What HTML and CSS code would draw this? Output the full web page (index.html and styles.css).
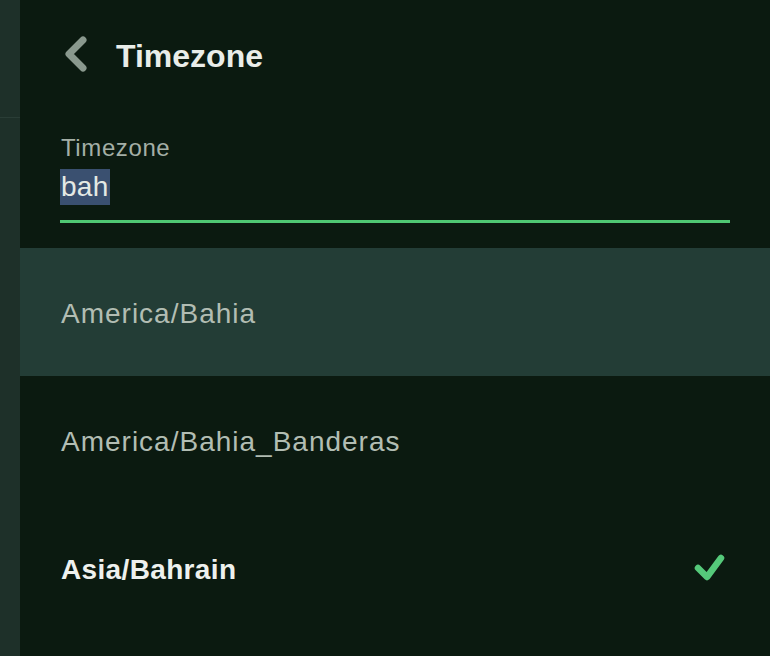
FILE: index.html
```html
<!DOCTYPE html>
<html>
<head>
<meta charset="utf-8">
<link rel="stylesheet" href="styles.css">
</head>
<body>
<div class="app">
  <aside class="sidebar"><div class="sidebar-top"></div></aside>
  <main class="panel">
    <header class="header">
      <svg class="back" width="30" height="40" viewBox="0 0 30 40">
        <polyline points="22,5 8,19 22,33" fill="none" stroke="#8a998e" stroke-width="7" stroke-linecap="round" stroke-linejoin="round"/>
      </svg>
      <h1 class="title">Timezone</h1>
    </header>
    <div class="field">
      <div class="field-label">Timezone</div>
      <div class="field-input"><span class="selected">bah</span></div>
    </div>
    <ul class="list">
      <li class="item item-hover">America/Bahia</li>
      <li class="item">America/Bahia_Banderas</li>
      <li class="item item-active">Asia/Bahrain
        <svg class="check" width="36" height="34" viewBox="0 0 36 34">
          <polyline points="6,17 15,26 29,7" fill="none" stroke="#55c97a" stroke-width="6.5" stroke-linecap="round" stroke-linejoin="round"/>
        </svg>
      </li>
    </ul>
  </main>
</div>
</body>
</html>
```
FILE: styles.css
```css
html, body {
  margin: 0;
  padding: 0;
  background: #0b1a10;
  font-family: "Liberation Sans", Arial, sans-serif;
}
.app {
  display: flex;
  width: 770px;
  height: 656px;
  overflow: hidden;
}
.sidebar {
  width: 20px;
  flex: none;
  background: #1e3029;
}
.sidebar-top {
  height: 117px;
  border-bottom: 1px solid #2a3d36;
}
.panel {
  flex: 1;
  display: flex;
  flex-direction: column;
}
.header {
  height: 110px;
  display: flex;
  align-items: center;
  padding-left: 40px;
}
.back {
  display: block;
  margin-left: 1px;
  margin-right: 25px;
}
.title {
  margin: 0;
  padding-top: 2px;
  font-size: 32px;
  font-weight: 700;
  color: #e9ede9;
  line-height: 40px;
}
.field {
  margin: 23px 40px 0 40px;
  border-bottom: 3px solid #4fc873;
  padding-bottom: 15px;
}
.field-label {
  font-size: 24px;
  line-height: 28px;
  padding-top: 1px;
  letter-spacing: 0.6px;
  color: #a4afa6;
  margin-left: 1px;
}
.field-input {
  margin-top: 7px;
  height: 36px;
  font-size: 28px;
  line-height: 36px;
  color: #e4e9e4;
}
.selected {
  display: inline-block;
  background: #3a5070;
  padding: 0 1px;
  letter-spacing: 0.3px;
}
.list {
  list-style: none;
  margin: 25px 0 0 0;
  padding: 0;
}
.item {
  height: 128px;
  box-sizing: border-box;
  display: flex;
  align-items: center;
  justify-content: space-between;
  padding: 3px 40px 0 41px;
  font-size: 28px;
  letter-spacing: 1px;
  color: #b2bdb3;
}
.item-hover {
  background: #233d36;
}
.item-active {
  font-weight: 700;
  letter-spacing: 0.35px;
  color: #eef1ee;
}
.check {
  display: block;
  margin-right: 2px;
  margin-top: -3px;
}
```
